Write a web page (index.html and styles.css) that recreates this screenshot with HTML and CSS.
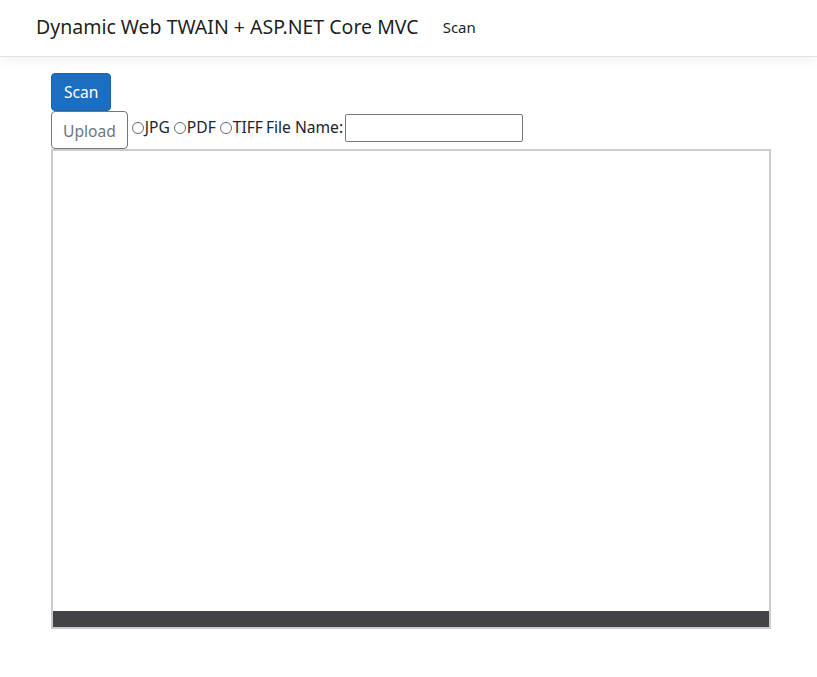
FILE: index.html
```html
<!DOCTYPE html>
<html lang="en">
<head>
<meta charset="utf-8">
<title>Dynamic Web TWAIN + ASP.NET Core MVC</title>
<link rel="stylesheet" href="styles.css">
</head>
<body>
<header class="navbar">
  <a class="brand" href="#">Dynamic Web TWAIN + ASP.NET Core MVC</a>
  <a class="nav-link" href="#">Scan</a>
</header>
<main class="container">
  <div class="row-scan">
    <button class="btn btn-primary" type="button">Scan</button>
  </div>
  <div class="row-upload">
    <button class="btn btn-upload" type="button">Upload</button>
    <label class="opt"><input class="radio" type="radio" name="fmt">JPG</label>
    <label class="opt"><input class="radio" type="radio" name="fmt">PDF</label>
    <label class="opt"><input class="radio" type="radio" name="fmt">TIFF</label>
    <label class="fname" for="fname">File Name:</label>
    <input class="text-input" id="fname" type="text">
  </div>
  <div class="viewer">
    <div class="viewer-canvas"></div>
    <div class="viewer-bar"></div>
  </div>
</main>
</body>
</html>
```

FILE: styles.css
```css
* { box-sizing: border-box; }
html, body { margin: 0; padding: 0; background: #fff; }
body {
  font-family: "Segoe UI", "Noto Sans", "Open Sans", sans-serif;
  font-size: 15.6px;
  line-height: 1.5;
  color: #212529;
}
.navbar {
  height: 57px;
  display: flex;
  align-items: center;
  padding: 0 0 0 36px;
  border-bottom: 1px solid #e3e3e3;
  box-shadow: 0 4px 12px rgba(0,0,0,0.05);
}
.brand {
  font-size: 19.5px;
  line-height: 30px;
  color: rgba(0,0,0,0.9);
  text-decoration: none;
  margin-right: 16px;
  margin-top: -3px;
}
.nav-link {
  font-size: 15px;
  color: #212529;
  text-decoration: none;
  padding: 8px;
  margin-top: -2px;
}
.container {
  padding: 16px 0 0 51px;
}
.btn {
  font-family: inherit;
  font-size: 15.6px;
  line-height: 24px;
  padding: 6px 12px;
  border-radius: 4px;
  border: 1px solid transparent;
  cursor: pointer;
}
.btn-primary {
  background: #1b6ec2;
  border-color: #1861ac;
  color: #fff;
}
.row-scan { display: flex; }
.row-upload {
  display: flex;
  align-items: flex-start;
  height: 38px;
}
.btn-upload {
  background: #fff;
  border-color: #767676;
  color: #6c757d;
  padding: 7px 11px 5px;
}
.opt, .fname {
  display: flex;
  align-items: center;
  margin-top: 4px;
  line-height: 24px;
  color: #212529;
}
.radio {
  appearance: none;
  -webkit-appearance: none;
  width: 12px;
  height: 12px;
  border: 1px solid #6b6b6b;
  border-radius: 50%;
  margin: 1px 1px 0 4px;
  background: #fff;
}
.fname { margin-left: 3px; }
.text-input {
  width: 178px;
  height: 28px;
  margin: 3px 0 0 2px;
  border: 1px solid #767676;
  border-radius: 2px;
  font-family: inherit;
  font-size: 15.6px;
  padding: 1px 2px;
}
.viewer {
  width: 720px;
  height: 480px;
  border: 2px solid #cccccc;
  display: flex;
  flex-direction: column;
}
.viewer-canvas { flex: 1; background: #fff; }
.viewer-bar { height: 16px; background: #434247; }
```
